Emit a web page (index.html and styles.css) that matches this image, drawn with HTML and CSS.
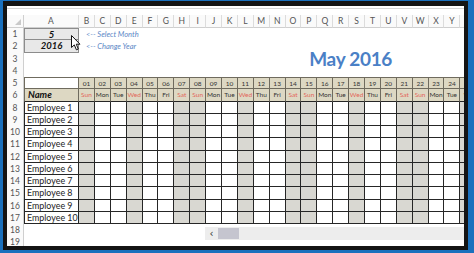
FILE: index.html
```html
<!DOCTYPE html>
<html lang="en">
<head>
<meta charset="utf-8">
<title>May 2016 Attendance</title>
<link rel="stylesheet" href="styles.css">
</head>
<body>
<div class="frame">
  <div class="sheet">
    <div class="row hdr">
      <div class="corner"><span class="tri"></span></div>
      <div class="ch">A</div><div class="ch">B</div><div class="ch">C</div><div class="ch">D</div><div class="ch">E</div><div class="ch">F</div><div class="ch">G</div><div class="ch">H</div><div class="ch">I</div><div class="ch">J</div><div class="ch">K</div><div class="ch">L</div><div class="ch">M</div><div class="ch">N</div><div class="ch">O</div><div class="ch">P</div><div class="ch">Q</div><div class="ch">R</div><div class="ch">S</div><div class="ch">T</div><div class="ch">U</div><div class="ch">V</div><div class="ch">W</div><div class="ch">X</div><div class="ch">Y</div><div class="ch"></div>
    </div>
    <div class="row"><div class="rn">1</div><div class="inp top">5</div><div class="note">&lt;-- Select Month</div></div>
    <div class="row"><div class="rn">2</div><div class="inp">2016</div><div class="note">&lt;-- Change Year</div><div class="title">May 2016</div></div>
    <div class="row"><div class="rn">3</div></div>
    <div class="row"><div class="rn">4</div></div>
    <div class="row days"><div class="rn">5</div><div class="lab"></div><i>01</i><i>02</i><i>03</i><i>04</i><i>05</i><i>06</i><i>07</i><i>08</i><i>09</i><i>10</i><i>11</i><i>12</i><i>13</i><i>14</i><i>15</i><i>16</i><i>17</i><i>18</i><i>19</i><i>20</i><i>21</i><i>22</i><i>23</i><i>24</i><i></i></div>
    <div class="row names"><div class="rn">6</div><div class="lab">Name</div><i>Sun</i><i>Mon</i><i>Tue</i><i>Wed</i><i>Thu</i><i>Fri</i><i>Sat</i><i>Sun</i><i>Mon</i><i>Tue</i><i>Wed</i><i>Thu</i><i>Fri</i><i>Sat</i><i>Sun</i><i>Mon</i><i>Tue</i><i>Wed</i><i>Thu</i><i>Fri</i><i>Sat</i><i>Sun</i><i>Mon</i><i>Tue</i><i class="edge">W</i></div>
    <div class="row emp"><div class="rn">8</div><div class="lab">Employee 1</div><i></i><i></i><i></i><i></i><i></i><i></i><i></i><i></i><i></i><i></i><i></i><i></i><i></i><i></i><i></i><i></i><i></i><i></i><i></i><i></i><i></i><i></i><i></i><i></i><i></i></div>
    <div class="row emp"><div class="rn">9</div><div class="lab">Employee 2</div><i></i><i></i><i></i><i></i><i></i><i></i><i></i><i></i><i></i><i></i><i></i><i></i><i></i><i></i><i></i><i></i><i></i><i></i><i></i><i></i><i></i><i></i><i></i><i></i><i></i></div>
    <div class="row emp"><div class="rn">10</div><div class="lab">Employee 3</div><i></i><i></i><i></i><i></i><i></i><i></i><i></i><i></i><i></i><i></i><i></i><i></i><i></i><i></i><i></i><i></i><i></i><i></i><i></i><i></i><i></i><i></i><i></i><i></i><i></i></div>
    <div class="row emp"><div class="rn">11</div><div class="lab">Employee 4</div><i></i><i></i><i></i><i></i><i></i><i></i><i></i><i></i><i></i><i></i><i></i><i></i><i></i><i></i><i></i><i></i><i></i><i></i><i></i><i></i><i></i><i></i><i></i><i></i><i></i></div>
    <div class="row emp"><div class="rn">12</div><div class="lab">Employee 5</div><i></i><i></i><i></i><i></i><i></i><i></i><i></i><i></i><i></i><i></i><i></i><i></i><i></i><i></i><i></i><i></i><i></i><i></i><i></i><i></i><i></i><i></i><i></i><i></i><i></i></div>
    <div class="row emp"><div class="rn">13</div><div class="lab">Employee 6</div><i></i><i></i><i></i><i></i><i></i><i></i><i></i><i></i><i></i><i></i><i></i><i></i><i></i><i></i><i></i><i></i><i></i><i></i><i></i><i></i><i></i><i></i><i></i><i></i><i></i></div>
    <div class="row emp"><div class="rn">14</div><div class="lab">Employee 7</div><i></i><i></i><i></i><i></i><i></i><i></i><i></i><i></i><i></i><i></i><i></i><i></i><i></i><i></i><i></i><i></i><i></i><i></i><i></i><i></i><i></i><i></i><i></i><i></i><i></i></div>
    <div class="row emp"><div class="rn">15</div><div class="lab">Employee 8</div><i></i><i></i><i></i><i></i><i></i><i></i><i></i><i></i><i></i><i></i><i></i><i></i><i></i><i></i><i></i><i></i><i></i><i></i><i></i><i></i><i></i><i></i><i></i><i></i><i></i></div>
    <div class="row emp"><div class="rn">16</div><div class="lab">Employee 9</div><i></i><i></i><i></i><i></i><i></i><i></i><i></i><i></i><i></i><i></i><i></i><i></i><i></i><i></i><i></i><i></i><i></i><i></i><i></i><i></i><i></i><i></i><i></i><i></i><i></i></div>
    <div class="row emp"><div class="rn">17</div><div class="lab">Employee 10</div><i></i><i></i><i></i><i></i><i></i><i></i><i></i><i></i><i></i><i></i><i></i><i></i><i></i><i></i><i></i><i></i><i></i><i></i><i></i><i></i><i></i><i></i><i></i><i></i><i></i></div>
    <div class="row"><div class="rn">18</div></div>
    <div class="row"><div class="rn">19</div></div>
  </div>
  <svg class="cursor" width="11" height="16" viewBox="0 0 11 16"><path d="M0.5 0.5 L0.5 12.5 L3.3 9.9 L5.4 14.8 L7.3 14 L5.3 9.2 L9 9.2 Z" fill="#fff" stroke="#111" stroke-width="1" stroke-linejoin="round"/></svg>
  <div class="hscroll"><span class="arrow">‹</span><span class="thumb"></span></div>
</div>
</body>
</html>
```

FILE: styles.css
```css
* { box-sizing: border-box; }
html, body { margin: 0; padding: 0; }
body {
  width: 474px;
  height: 253px;
  overflow: hidden;
  background: #1a70bd;
  font-family: Lato, "Liberation Sans", sans-serif;
}
.frame {
  position: relative;
  margin: 1px 0 0 3px;
  width: 465px;
  height: 249px;
  border: 4px solid #141414;
  border-top-width: 5px;
  background: #fff;
  overflow: hidden;
}
.sheet {
  display: grid;
  grid-template-columns: 17px 55px repeat(25, 15.9px);
  grid-template-rows: 22px repeat(18, 12.25px);
  background: linear-gradient(#d6d6d6, #d6d6d6) 0 2px / 100% 1px no-repeat;
}
.row { display: contents; }
.corner, .ch {
  align-self: end;
  height: 13px;
  background: #fafafa;
  border-bottom: 1px solid #cfcfcf;
}
.ch {
  border-right: 1px solid #dcdcdc;
  font-size: 8.5px;
  color: #555;
  display: flex;
  align-items: center;
  justify-content: center;
}
.corner {
  border-right: 1px solid #cfcfcf;
  display: flex;
  align-items: flex-end;
  justify-content: flex-end;
  padding: 0 2px 2px 0;
}
.tri {
  width: 0;
  height: 0;
  border-left: 6px solid transparent;
  border-bottom: 6px solid #c9c9c9;
}
.rn {
  grid-column: 1;
  background: #fafafa;
  border-right: 1px solid #cfcfcf;
  font-size: 8.5px;
  color: #555;
  display: flex;
  align-items: center;
  justify-content: center;
}
.inp {
  background: #e8e8e8;
  border: 1px solid #8c8c8c;
  border-top: none;
  font-weight: 700;
  font-style: italic;
  font-size: 9.5px;
  color: #111;
  display: flex;
  align-items: center;
  justify-content: center;
}
.inp.top { border-top: 1px solid #8c8c8c; }
.note {
  grid-column: 3 / 14;
  font-style: italic;
  font-size: 7.5px;
  color: #5b87c6;
  display: flex;
  align-items: center;
  padding-left: 7px;
  white-space: nowrap;
}
.title {
  grid-column: 15 / 25;
  grid-row: 3 / 6;
  display: flex;
  align-items: center;
  justify-content: center;
  padding-left: 3px;
  font-size: 19px;
  font-weight: 700;
  letter-spacing: -0.3px;
  color: #4a80c6;
  line-height: 1;
  white-space: nowrap;
}
.days i, .names i {
  font-style: normal;
  background: #ddd8c3;
  border-right: 1px solid #6f6b5e;
  border-bottom: 1px solid #6f6b5e;
  font-size: 6.5px;
  color: #333;
  display: flex;
  align-items: center;
  justify-content: center;
}
.days i { border-top: 1px solid #6f6b5e; }
.days .lab {
  background: #fff;
  border: 1px solid #6f6b5e;
}
.names .lab {
  background: #ddd8c3;
  border-left: 1px solid #6f6b5e;
  border-right: 1px solid #6f6b5e;
  border-bottom: 1px solid #262626;
  font-weight: 700;
  font-style: italic;
  font-size: 9.5px;
  color: #111;
  padding-left: 3px;
  display: flex;
  align-items: center;
}
.names i { border-bottom-color: #262626; }
.names i:nth-of-type(7n+1),
.names i:nth-of-type(7n+4),
.names i:nth-of-type(7n+7) { color: #e2675a; }
.names i.edge { justify-content: flex-start; padding-left: 3px; }
.emp i {
  background: #fff;
  border-right: 1px solid #262626;
  border-bottom: 1px solid #262626;
}
.emp i:nth-of-type(7n+1),
.emp i:nth-of-type(7n+4),
.emp i:nth-of-type(7n+7) { background: #d9d8d2; }
.emp .lab {
  border-left: 1px solid #262626;
  border-right: 1px solid #262626;
  border-bottom: 1px solid #262626;
  font-size: 8.9px;
  color: #222;
  padding-left: 2px;
  display: flex;
  align-items: center;
  white-space: nowrap;
}
.cursor {
  position: absolute;
  left: 64px;
  top: 29px;
}
.hscroll {
  position: absolute;
  left: 198px;
  top: 221px;
  width: 262px;
  height: 13px;
  background: #ededed;
  display: flex;
  align-items: center;
}
.arrow {
  font-family: "DejaVu Sans", sans-serif;
  font-size: 10px;
  color: #333;
  width: 13px;
  text-align: center;
  line-height: 1;
}
.thumb {
  width: 21px;
  height: 11px;
  background: #c5c5cf;
}
```
